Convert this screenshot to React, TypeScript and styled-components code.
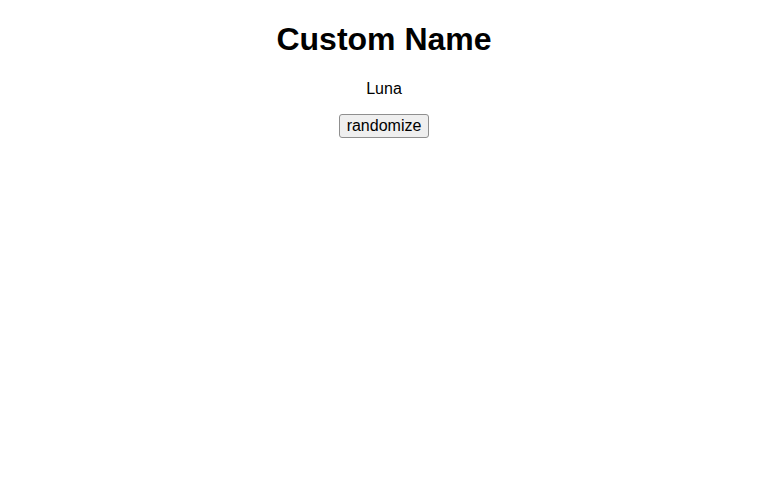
import React, { useState } from "react";
import styled, { createGlobalStyle } from "styled-components";

const GlobalStyle = createGlobalStyle`
  body {
    margin: 0;
    font-family: "Liberation Sans", Arial, sans-serif;
    background: #fff;
    color: #000;
  }
`;

const Page = styled.div`
  text-align: center;
`;

const Title = styled.h1`
  font-size: 32px;
  font-weight: bold;
  margin: 21.44px 0;
`;

const Name = styled.p`
  font-size: 16px;
  margin: 16px 0;
`;

const RandomButton = styled.button`
  font-family: "Liberation Sans", Arial, sans-serif;
  font-size: 16px;
  padding: 1px 7px;
  border: 1px solid #8f8f8f;
  border-radius: 3px;
  background: #efefef;
  color: #000;
  line-height: normal;
  height: 24px;
`;

const names = ["Luna", "Milo", "Nova", "Oscar", "Ivy", "Felix"];

export default function App() {
  const [name, setName] = useState("Luna");

  return (
    <Page>
      <GlobalStyle />
      <Title>Custom Name</Title>
      <Name>{name}</Name>
      <RandomButton onClick={() => setName(names[Math.floor(Math.random() * names.length)])}>
        randomize
      </RandomButton>
    </Page>
  );
}
